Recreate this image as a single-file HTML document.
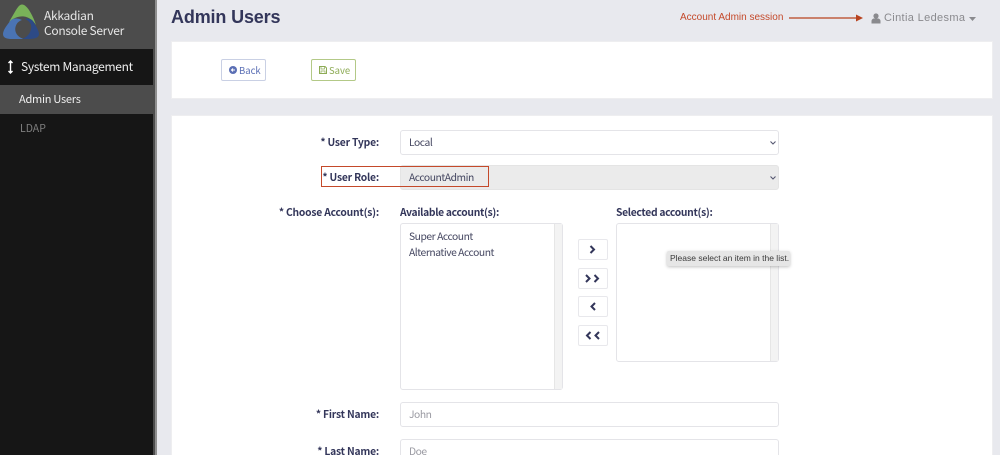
<!DOCTYPE html>
<html><head><meta charset="utf-8"><style>
*{box-sizing:border-box}
html,body{margin:0;padding:0;width:1000px;height:455px;overflow:hidden}
#p{position:absolute;left:0;top:0;width:1000px;height:455px;overflow:hidden;background:#e8e9ee;font-family:"Liberation Sans","Noto Sans CJK JP",sans-serif;color:#3b3d5c}
.a{position:absolute;white-space:nowrap}
.n{font-family:"Noto Sans CJK JP","Liberation Sans",sans-serif}
.l{font-family:"Noto Sans CJK JP","Liberation Sans",sans-serif;font-size:10.300px;letter-spacing:-.2px;line-height:14px;font-weight:bold;color:#33365a;text-align:right;right:621px}
.h{font-family:"Noto Sans CJK JP","Liberation Sans",sans-serif;font-size:10.300px;letter-spacing:-.3px;line-height:14px;font-weight:bold;color:#33365a}
.f{position:absolute;left:400px;width:379px;height:25px;background:#fff;border:1px solid #e4e4e8;border-radius:3px;font-family:"Noto Sans CJK JP","Liberation Sans",sans-serif;font-size:10.300px;letter-spacing:-.45px;color:#444660;line-height:21px;padding-left:8px}
.box{position:absolute;background:#fff;border:1px solid #e4e4e8;border-radius:3px}
.sb{position:absolute;right:0;top:0;bottom:0;width:8px;background:#f3f3f3;border-left:1px solid #e6e6e6}
.btn{position:absolute;left:578px;width:30px;height:21px;background:#fff;border:1px solid #e8e8ec;border-radius:2px}
.btn svg{position:absolute;left:0;top:0}
</style></head><body>
<div id="p">
<div class="a" style="left:0;top:0;width:157px;height:455px;background:#8f8f8f"></div>
<div class="a" style="left:0;top:0;width:155px;height:455px;background:#4c4c4c"></div>
<div class="a" style="left:0;top:49px;width:153px;height:36px;background:#161616"></div>
<div class="a" style="left:0;top:114px;width:153px;height:341px;background:#161616"></div>
<svg class="a" style="left:0;top:0" width="44" height="44" viewBox="0 0 44 44">
<path d="M22 4.500C19.500 4.500 18 7 16 10L9 22C14 17.500 19 16 24 16.500C28 17 32 19 36 25C33 16 29 9 26 6.500C24.500 5 23.500 4.500 22 4.500Z" fill="#79b259"/>
<path d="M11 20C7 25 3 30 3 34C3 38 7 39 12 39L26 39C19 39 14 33 15.500 27C16.500 23 19 21 22 20C18 18 14 18 11 20Z" fill="#4a74b4"/>
<path d="M28 39C34 39 39 38 39 34C39 31 36 26 33 21C31.500 19 28 18 25 19C30 21 32 25 31 29C30 34 27 37 22 39Z" fill="#2d4a86"/>
</svg>
<div class="a n" style="left:44px;top:9px;font-size:12px;letter-spacing:-.3px;line-height:14.500px;color:#e6e6e6">Akkadian<br>Console Server</div>
<svg class="a" style="left:7px;top:60px" width="7" height="14" viewBox="0 0 7 14"><path d="M3.500 1V13M1.500 3L3.500 1L5.500 3M1.500 11L3.500 13L5.500 11" stroke="#fff" stroke-width="1.400" fill="none"/></svg>
<div class="a n" style="left:21px;top:59px;font-size:12px;letter-spacing:-.3px;line-height:15px;color:#efefef">System Management</div>
<div class="a n" style="left:19px;top:92px;font-size:11px;letter-spacing:-.25px;line-height:14px;color:#f0f0f0">Admin Users</div>
<div class="a n" style="left:20px;top:122px;font-size:10.500px;line-height:14px;color:#7f7f7f">LDAP</div>

<div class="a" style="left:171px;top:6px;font-size:18px;line-height:22px;font-weight:bold;color:#33365a;letter-spacing:-.15px">Admin Users</div>
<div class="a" style="left:680px;top:12px;font-size:10px;line-height:12px;color:#c4492a">Account Admin session</div>
<svg class="a" style="left:788px;top:13px" width="76" height="10" viewBox="0 0 76 10"><path d="M1 5H68" stroke="#b8431f" stroke-width="1.200"/><path d="M68 1.500L75 5L68 8.500Z" fill="#b8431f"/></svg>
<svg class="a" style="left:871px;top:13px" width="10" height="11" viewBox="0 0 10 11"><circle cx="5" cy="3" r="2.600" fill="#8a8a8e"/><path d="M.5 10.500V8C.5 6.500 2 5.500 3 5.500H7C8 5.500 9.500 6.500 9.500 8V10.500Z" fill="#8a8a8e"/></svg>
<div class="a" style="left:884px;top:11px;font-size:11px;line-height:14px;color:#8a8a8e;letter-spacing:.35px">Cintia Ledesma</div>
<svg class="a" style="left:969px;top:17px" width="7" height="4"><path d="M0 0H7L3.500 4Z" fill="#8a8a8e"/></svg>

<div class="a" style="left:171px;top:41px;width:822px;height:58px;background:#fff;border:1px solid #eeeef0"></div>
<div class="a" style="left:221px;top:59px;width:45px;height:22px;background:#fff;border:1px solid #c9d0e4;border-radius:2px"></div>
<svg class="a" style="left:229px;top:66px" width="8" height="8"><circle cx="4" cy="4" r="4" fill="#5b6fb5"/><path d="M6 4H2.500M4 2.500L2.500 4L4 5.500" stroke="#fff" stroke-width="1" fill="none"/></svg>
<div class="a n" style="left:239px;top:64px;font-size:9.500px;line-height:12px;color:#5b6fb5">Back</div>
<div class="a" style="left:311px;top:59px;width:45px;height:22px;background:#fff;border:1px solid #b3c987;border-radius:2px"></div>
<svg class="a" style="left:319px;top:66px" width="8" height="8"><path d="M.5.5H6L7.500 2V7.500H.5Z" fill="none" stroke="#8dab55"/><path d="M2 .5V3H5.500V.5M2 7.500V5H6V7.500" fill="none" stroke="#8dab55" stroke-width=".7"/></svg>
<div class="a n" style="left:329px;top:64px;font-size:9.500px;line-height:12px;color:#8dab55">Save</div>

<div class="a" style="left:171px;top:115px;width:822px;height:340px;background:#fff;border:1px solid #eeeef0;border-bottom:0"></div>

<div class="a l" style="top:135px">* User Type:</div>
<div class="f" style="top:130px">Local</div>
<svg class="a" style="left:770px;top:141px" width="6" height="4"><path d="M.5.5L3 3L5.500.5" stroke="#555770" stroke-width="1.100" fill="none"/></svg>

<div class="a l" style="top:170px">* User Role:</div>
<div class="f" style="top:165px;background:#ebebeb;border-color:#e4e4e4">AccountAdmin</div>
<svg class="a" style="left:770px;top:176px" width="6" height="4"><path d="M.5.5L3 3L5.500.5" stroke="#555770" stroke-width="1.100" fill="none"/></svg>
<div class="a" style="left:321px;top:166px;width:168px;height:21px;border:1.500px solid #c4492a"></div>

<div class="a l" style="top:205px">* Choose Account(s):</div>
<div class="a h" style="left:400px;top:205px">Available account(s):</div>
<div class="a h" style="left:616px;top:205px">Selected account(s):</div>

<div class="box" style="left:400px;top:223px;width:163px;height:167px"><div class="sb"></div></div>
<div class="a n" style="left:409px;top:228px;font-size:10.300px;letter-spacing:-.45px;line-height:16px;color:#444660">Super Account<br>Alternative Account</div>

<div class="box" style="left:616px;top:223px;width:163px;height:139px"><div class="sb"></div></div>

<div class="btn" style="top:239px"><svg width="28" height="19"><path d="M11.500 6L15 9.500L11.500 13" stroke="#33365a" stroke-width="2" fill="none"/></svg></div>
<div class="btn" style="top:268px"><svg width="28" height="19"><path d="M7 6L10.500 9.500L7 13M15.500 6L19 9.500L15.500 13" stroke="#33365a" stroke-width="2" fill="none"/></svg></div>
<div class="btn" style="top:296px"><svg width="28" height="19"><path d="M16 6L12.500 9.500L16 13" stroke="#33365a" stroke-width="2" fill="none"/></svg></div>
<div class="btn" style="top:325px"><svg width="28" height="19"><path d="M11.500 6L8 9.500L11.500 13M20 6L16.500 9.500L20 13" stroke="#33365a" stroke-width="2" fill="none"/></svg></div>

<div class="a" style="left:667px;top:251px;width:123px;height:15px;background:#e6e6e6;border-radius:2px;box-shadow:0 1px 3px rgba(0,0,0,.25);font-size:8.500px;line-height:15px;padding-left:3px;color:#3a3a3a">Please select an item in the list.</div>

<div class="a l" style="top:407px">* First Name:</div>
<div class="f" style="top:402px;color:#9a9aa2">John</div>
<div class="a l" style="top:444px">* Last Name:</div>
<div class="f" style="top:439px;color:#9a9aa2">Doe</div>
</div>
</body></html>
